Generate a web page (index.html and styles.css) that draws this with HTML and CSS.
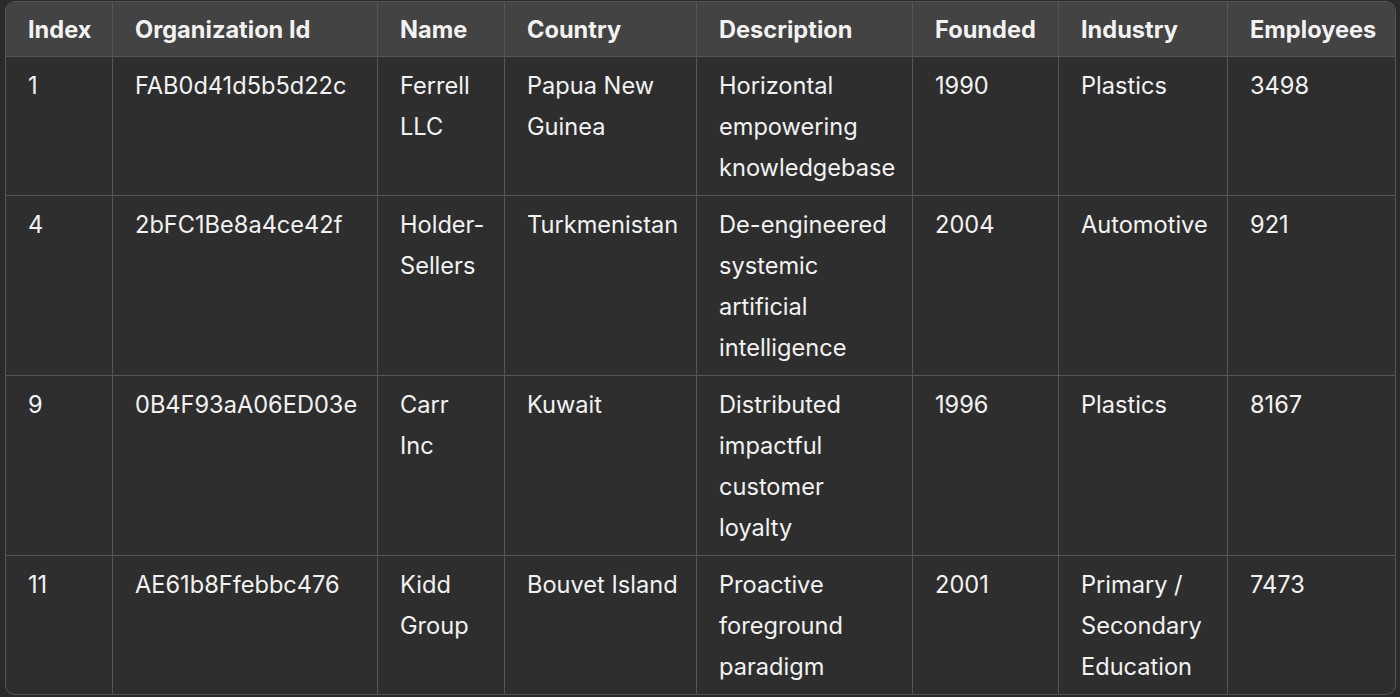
FILE: index.html
```html
<!DOCTYPE html>
<html>
<head>
<meta charset="utf-8">
<link rel="stylesheet" href="styles.css">
</head>
<body>
<div class="wrap">
<table class="grid">
<colgroup>
<col class="c1"><col class="c2"><col class="c3"><col class="c4"><col class="c5"><col class="c6"><col class="c7"><col class="c8">
</colgroup>
<thead>
<tr><th>Index</th><th>Organization Id</th><th>Name</th><th>Country</th><th>Description</th><th>Founded</th><th>Industry</th><th>Employees</th></tr>
</thead>
<tbody>
<tr><td>1</td><td>FAB0d41d5b5d22c</td><td>Ferrell LLC</td><td>Papua New Guinea</td><td>Horizontal empowering knowledgebase</td><td>1990</td><td>Plastics</td><td>3498</td></tr>
<tr><td>4</td><td>2bFC1Be8a4ce42f</td><td>Holder-Sellers</td><td>Turkmenistan</td><td>De-engineered systemic artificial intelligence</td><td>2004</td><td>Automotive</td><td>921</td></tr>
<tr><td>9</td><td>0B4F93aA06ED03e</td><td>Carr Inc</td><td>Kuwait</td><td>Distributed impactful customer loyalty</td><td>1996</td><td>Plastics</td><td>8167</td></tr>
<tr><td>11</td><td>AE61b8Ffebbc476</td><td>Kidd Group</td><td>Bouvet Island</td><td>Proactive foreground paradigm</td><td>2001</td><td>Primary / Secondary Education</td><td>7473</td></tr>
</tbody>
</table>
</div>
</body>
</html>
```
FILE: styles.css
```css
html, body {
  margin: 0;
  padding: 0;
  background: #2a2a2a;
  height: 697px;
  overflow: hidden;
}
.wrap {
  padding: 1px 5px 0 5px;
}
.grid {
  width: 1390px;
  table-layout: fixed;
  border-collapse: separate;
  border-spacing: 0;
  border: 1px solid #555;
  border-radius: 10px;
  overflow: hidden;
  background: #2e2e2e;
  font-family: Inter, "Noto Sans", sans-serif;
  font-size: 23.6px;
  line-height: 41px;
  color: #f2f2f2;
}
.c1 { width: 107px; }
.c2 { width: 265px; }
.c3 { width: 127px; }
.c4 { width: 192px; }
.c5 { width: 216px; }
.c6 { width: 146px; }
.c7 { width: 169px; }
.c8 { width: 167px; }
th, td {
  text-align: left;
  vertical-align: top;
  padding: 8px 17px 7px 22px;
  border-right: 1px solid #555;
  border-bottom: 1px solid #555;
}
th:last-child, td:last-child { border-right: none; }
tbody tr:last-child td { border-bottom: none; }
th {
  background: #434343;
  font-weight: 700;
  padding-top: 7px;
  padding-bottom: 6px;
}
td {
  font-weight: 400;
}
```
